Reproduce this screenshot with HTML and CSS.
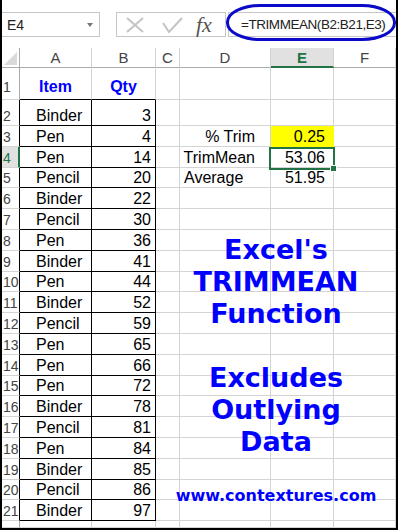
FILE: index.html
```html
<!DOCTYPE html>
<html lang="en">
<head>
    <meta charset="UTF-8">
    <meta name="viewport" content="width=device-width, initial-scale=1.0">
    <title>Excel TRIMMEAN Function</title>
    <link rel="stylesheet" href="styles.css">
</head>
<body>
<div class="frame">
    <!-- formula bar -->
    <div class="bar">
        <div class="namebox"><span>E4</span><i class="drop"></i></div>
        <div class="tools">
            <svg class="cancel" width="18" height="16" viewBox="0 0 18 16"><path d="M1 1L17 15M17 1L1 15"/></svg>
            <svg class="enter" width="21" height="16" viewBox="0 0 21 16"><path d="M1 6L7 15L20 1"/></svg>
            <span class="fx">fx</span>
        </div>
        <div class="formula">=TRIMMEAN(B2:B21,E3)</div>
        <div class="circle"></div>
    </div>

    <!-- worksheet -->
    <div class="sheet">
        <div class="hd corner"><svg width="13" height="13" viewBox="0 0 13 13"><polygon points="13,0 13,13 0,13"/></svg></div>
        <div class="hd">A</div><div class="hd">B</div><div class="hd">C</div><div class="hd">D</div><div class="hd sel">E</div><div class="hd">F</div>

        <div class="rh top">1</div><div class="c h1">Item</div><div class="c h1">Qty</div><div class="c"></div><div class="c"></div><div class="c"></div><div class="c"></div>
        <div class="rh in">2</div><div class="c a">Binder</div><div class="c b">3</div><div class="c"></div><div class="c"></div><div class="c"></div><div class="c"></div>
        <div class="rh in">3</div><div class="c a">Pen</div><div class="c b">4</div><div class="c"></div><div class="c lbl">% Trim</div><div class="c val yellow">0.25</div><div class="c"></div>
        <div class="rh in sel">4</div><div class="c a">Pen</div><div class="c b">14</div><div class="c"></div><div class="c lbl">TrimMean</div><div class="c val active">53.06</div><div class="c"></div>
        <div class="rh in">5</div><div class="c a">Pencil</div><div class="c b">20</div><div class="c"></div><div class="c">Average</div><div class="c val">51.95</div><div class="c"></div>
        <div class="rh in">6</div><div class="c a">Binder</div><div class="c b">22</div><div class="c"></div><div class="c"></div><div class="c"></div><div class="c"></div>
        <div class="rh in">7</div><div class="c a">Pencil</div><div class="c b">30</div><div class="c"></div><div class="c"></div><div class="c"></div><div class="c"></div>
        <div class="rh in">8</div><div class="c a">Pen</div><div class="c b">36</div><div class="c"></div><div class="c"></div><div class="c"></div><div class="c"></div>
        <div class="rh in">9</div><div class="c a">Binder</div><div class="c b">41</div><div class="c"></div><div class="c"></div><div class="c"></div><div class="c"></div>
        <div class="rh in">10</div><div class="c a">Pen</div><div class="c b">44</div><div class="c"></div><div class="c"></div><div class="c"></div><div class="c"></div>
        <div class="rh in">11</div><div class="c a">Binder</div><div class="c b">52</div><div class="c"></div><div class="c"></div><div class="c"></div><div class="c"></div>
        <div class="rh in">12</div><div class="c a">Pencil</div><div class="c b">59</div><div class="c"></div><div class="c"></div><div class="c"></div><div class="c"></div>
        <div class="rh in">13</div><div class="c a">Pen</div><div class="c b">65</div><div class="c"></div><div class="c"></div><div class="c"></div><div class="c"></div>
        <div class="rh in">14</div><div class="c a">Pen</div><div class="c b">66</div><div class="c"></div><div class="c"></div><div class="c"></div><div class="c"></div>
        <div class="rh in">15</div><div class="c a">Pen</div><div class="c b">72</div><div class="c"></div><div class="c"></div><div class="c"></div><div class="c"></div>
        <div class="rh in">16</div><div class="c a">Binder</div><div class="c b">78</div><div class="c"></div><div class="c"></div><div class="c"></div><div class="c"></div>
        <div class="rh in">17</div><div class="c a">Pencil</div><div class="c b">81</div><div class="c"></div><div class="c"></div><div class="c"></div><div class="c"></div>
        <div class="rh in">18</div><div class="c a">Pen</div><div class="c b">84</div><div class="c"></div><div class="c"></div><div class="c"></div><div class="c"></div>
        <div class="rh in">19</div><div class="c a">Binder</div><div class="c b">85</div><div class="c"></div><div class="c"></div><div class="c"></div><div class="c"></div>
        <div class="rh in">20</div><div class="c a">Pencil</div><div class="c b">86</div><div class="c"></div><div class="c"></div><div class="c"></div><div class="c"></div>
        <div class="rh in">21</div><div class="c a">Binder</div><div class="c b">97</div><div class="c"></div><div class="c"></div><div class="c"></div><div class="c"></div>
        <div class="rh"></div><div class="c"></div><div class="c"></div><div class="c"></div><div class="c"></div><div class="c"></div><div class="c"></div>
    </div>

    <!-- text box over the sheet -->
    <div class="note">
        <div>Excel's</div>
        <div>TRIMMEAN</div>
        <div>Function</div>
        <div>&nbsp;</div>
        <div>Excludes</div>
        <div>Outlying</div>
        <div>Data</div>
        <div class="link">www.contextures.com</div>
    </div>
</div>
</body>
</html>
```

FILE: styles.css
```css
body {
    margin: 0;
    font-family: "Liberation Sans", Arial, sans-serif;
    background-color: #fff;
}

.frame {
    position: relative;
    width: 398px;
    height: 530px;
    box-sizing: border-box;
    border: 2px solid #000;
    border-top: 0;
    display: flex;
    flex-direction: column;
    background-color: #fff;
}

/* Formula bar */
.bar {
    position: relative;
    height: 48px;
    flex: none;
    display: flex;
    align-items: flex-start;
    padding-top: 12px;
    box-sizing: border-box;
}

.namebox {
    width: 98px;
    height: 25px;
    box-sizing: border-box;
    border: 1px solid #c6c6c6;
    border-left: 0;
    display: flex;
    align-items: center;
    padding-left: 5px;
    font-size: 14px;
    color: #222;
}

.drop {
    margin-left: auto;
    margin-right: 6px;
    width: 0;
    height: 0;
    border-left: 3.5px solid transparent;
    border-right: 3.5px solid transparent;
    border-top: 4px solid #777;
}

.tools {
    margin-left: 16px;
    width: 110px;
    height: 25px;
    box-sizing: border-box;
    border: 1px solid #c6c6c6;
    display: flex;
    align-items: center;
    padding-left: 9px;
}

.tools svg path {
    fill: none;
    stroke: #c4c4c4;
    stroke-width: 2;
}

.enter {
    margin-left: 18px;
}

.fx {
    margin-left: 13px;
    font-family: "Liberation Serif", "Times New Roman", serif;
    font-style: italic;
    font-size: 22px;
    color: #555;
    line-height: 20px;
}

.formula {
    margin-left: 2px;
    flex: 1;
    height: 25px;
    box-sizing: border-box;
    border: 1px solid #c6c6c6;
    border-right: 0;
    padding-left: 12px;
    font-size: 13.5px;
    letter-spacing: -0.45px;
    line-height: 23px;
    color: #222;
}

.circle {
    position: absolute;
    left: 224px;
    top: 4px;
    width: 170px;
    height: 37px;
    box-sizing: border-box;
    border: 3px solid #0a0ac8;
    border-radius: 34px / 18px;
}

/* Worksheet grid */
.sheet {
    flex: 1;
    display: grid;
    grid-template-columns: 18px 72px 64px 24px 91px 63px 1fr;
    grid-template-rows: 20px 32px 26px repeat(19, 20.8px) 1fr;
}

.hd {
    box-sizing: border-box;
    border-right: 1px solid #d4d4d4;
    border-bottom: 1px solid #ababab;
    display: flex;
    align-items: center;
    justify-content: center;
    font-size: 15px;
    color: #444;
}

.hd.sel {
    background-color: #e1e1e1;
    border-bottom: 2px solid #217346;
    color: #217346;
    font-weight: bold;
}

.corner {
    align-items: flex-end;
    justify-content: flex-end;
    padding: 0 2px 2px 0;
    border-right-color: #ababab;
}

.corner polygon {
    fill: #dadada;
}

.rh {
    box-sizing: border-box;
    border-right: 1px solid #ababab;
    border-bottom: 1px solid #d4d4d4;
    display: flex;
    align-items: flex-end;
    padding-left: 1px;
    font-size: 14px;
    line-height: 18px;
    color: #444;
}

.rh.top {
    padding-bottom: 3px;
}

.rh.in {
    border-right-color: #000;
}

.rh.sel {
    background-color: #e1e1e1;
    border-right: 2px solid #217346;
    color: #217346;
}

.c {
    box-sizing: border-box;
    border-right: 1px solid #d4d4d4;
    border-bottom: 1px solid #d4d4d4;
    display: flex;
    align-items: flex-end;
    padding: 0 4px;
    font-size: 16px;
    line-height: 18px;
    white-space: nowrap;
    min-width: 0;
    color: #000;
}

.h1 {
    justify-content: center;
    padding-bottom: 3px;
    font-weight: bold;
    color: #0000ff;
    border-bottom-color: #000;
}

.a {
    padding-left: 16px;
    border-right-color: #000;
    border-bottom-color: #000;
}

.b {
    justify-content: flex-end;
    border-right-color: #000;
    border-bottom-color: #000;
}

.lbl {
    justify-content: flex-end;
    padding-right: 15px;
}

.val {
    justify-content: flex-end;
    padding-right: 8px;
}

.yellow {
    background-color: #ffff00;
    border-right-color: #ffff00;
    border-bottom-color: #ffff00;
}

/* active cell outline and fill handle */
.active {
    position: relative;
}

.active::after {
    content: "";
    position: absolute;
    top: 0;
    left: -2px;
    right: -2px;
    bottom: -3px;
    border: 2px solid #217346;
}

.active::before {
    content: "";
    position: absolute;
    right: -4px;
    bottom: -5px;
    width: 5px;
    height: 5px;
    background-color: #217346;
    border: 1px solid #fff;
    z-index: 2;
}

/* Text box */
.note {
    position: absolute;
    left: 164px;
    top: 234px;
    width: 220px;
    text-align: center;
    white-space: nowrap;
    font-family: "DejaVu Sans", Verdana, sans-serif;
    font-weight: bold;
    font-size: 27px;
    line-height: 32px;
    color: #0000ff;
}

.note .link {
    margin-top: 28px;
    font-size: 16px;
    line-height: 20px;
}
```
